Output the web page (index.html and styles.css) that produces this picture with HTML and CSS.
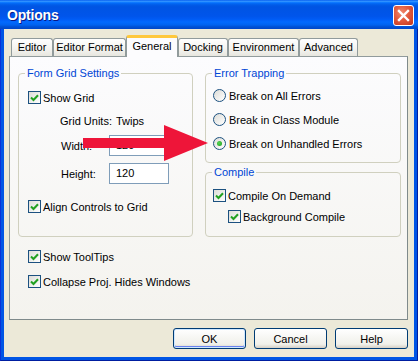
FILE: index.html
```html
<!DOCTYPE html>
<html lang="en">
<head>
    <meta charset="UTF-8">
    <title>Options</title>
    <link rel="stylesheet" href="styles.css">
</head>
<body>
    <div class="window">
        <div class="titlebar">
            <span class="title">Options</span>
            <span class="close">
                <svg width="13" height="13" viewBox="0 0 13 13"><path d="M2 2 L11 11 M11 2 L2 11" stroke="#fff" stroke-width="2.4" stroke-linecap="square"/></svg>
            </span>
        </div>
        <div class="client">
            <div class="tabs">
                <div class="tab w1">Editor</div>
                <div class="tab w2">Editor Format</div>
                <div class="tab w3 active">General</div>
                <div class="tab w4">Docking</div>
                <div class="tab w5">Environment</div>
                <div class="tab w6">Advanced</div>
            </div>
            <div class="panel">
                <div class="cols">
                    <fieldset class="group grid-group">
                        <legend>Form Grid Settings</legend>
                        <div class="group-body">
                            <label class="check-row"><span class="cb"><svg width="9" height="8" viewBox="0 0 9 8"><path d="M1 3.5 L3.5 6 L8 1.2" fill="none" stroke="#21a121" stroke-width="2"/></svg></span>Show Grid</label>
                            <div class="units"><span class="lbl">Grid Units:</span>Twips</div>
                            <div class="field-row first"><span class="lbl">Width:</span><span class="input">120</span></div>
                            <div class="field-row"><span class="lbl">Height:</span><span class="input">120</span></div>
                            <label class="check-row align"><span class="cb"><svg width="9" height="8" viewBox="0 0 9 8"><path d="M1 3.5 L3.5 6 L8 1.2" fill="none" stroke="#21a121" stroke-width="2"/></svg></span>Align Controls to Grid</label>
                        </div>
                    </fieldset>
                    <div class="right-col">
                        <fieldset class="group error-group">
                            <legend>Error Trapping</legend>
                            <div class="group-body radios">
                                <label class="check-row"><span class="rb"></span>Break on All Errors</label>
                                <label class="check-row"><span class="rb"></span>Break in Class Module</label>
                                <label class="check-row"><span class="rb on"></span>Break on Unhandled Errors</label>
                            </div>
                        </fieldset>
                        <fieldset class="group compile-group">
                            <legend>Compile</legend>
                            <div class="group-body compile">
                                <label class="check-row"><span class="cb"><svg width="9" height="8" viewBox="0 0 9 8"><path d="M1 3.5 L3.5 6 L8 1.2" fill="none" stroke="#21a121" stroke-width="2"/></svg></span>Compile On Demand</label>
                                <label class="check-row sub"><span class="cb"><svg width="9" height="8" viewBox="0 0 9 8"><path d="M1 3.5 L3.5 6 L8 1.2" fill="none" stroke="#21a121" stroke-width="2"/></svg></span>Background Compile</label>
                            </div>
                        </fieldset>
                    </div>
                </div>
                <div class="bottom-checks">
                    <label class="check-row"><span class="cb"><svg width="9" height="8" viewBox="0 0 9 8"><path d="M1 3.5 L3.5 6 L8 1.2" fill="none" stroke="#21a121" stroke-width="2"/></svg></span>Show ToolTips</label>
                    <label class="check-row"><span class="cb"><svg width="9" height="8" viewBox="0 0 9 8"><path d="M1 3.5 L3.5 6 L8 1.2" fill="none" stroke="#21a121" stroke-width="2"/></svg></span>Collapse Proj. Hides Windows</label>
                </div>
            </div>
            <div class="buttons">
                <button class="btn default">OK</button>
                <button class="btn">Cancel</button>
                <button class="btn">Help</button>
            </div>
        </div>

        <!-- red pointer arrow drawn over the dialog -->
        <svg class="arrow" width="418" height="361" viewBox="0 0 418 361">
            <polygon points="82,138 163,138 163,125 207,143 163,161 163,148 82,148" fill="#ee1539"/>
        </svg>
    </div>
</body>
</html>
```

FILE: styles.css
```css
body {
    margin: 0;
    font-family: "Liberation Sans", Arial, sans-serif;
    font-size: 11px;
    color: #000;
}
.window {
    position: relative;
    width: 418px;
    height: 361px;
    background: #0055e5;
    box-sizing: border-box;
    border-left: 1px solid #0831d9;
    border-right: 1px solid #001ea0;
    border-bottom: 1px solid #001ea0;
    display: flex;
    flex-direction: column;
}
.titlebar {
    height: 29px;
    flex: none;
    display: flex;
    align-items: flex-start;
    justify-content: space-between;
    background: linear-gradient(to bottom, #0058ee 0%, #3593ff 4%, #288eff 6%, #127dff 8%, #036ffc 10%, #0262ee 14%, #0057e5 20%, #0054e3 24%, #0055eb 56%, #005bf5 66%, #026afe 76%, #0062ef 86%, #0052d6 92%, #0046c8 100%);
    margin: 0 -1px;
}
.title {
    margin: 7px 0 0 7px;
    color: #fff;
    font-weight: bold;
    font-size: 14px;
    letter-spacing: -0.2px;
    text-shadow: 1px 1px #0a1883;
}
.close {
    margin: 5px 4px 0 0;
    width: 21px;
    height: 21px;
    box-sizing: border-box;
    border: 1px solid #fff;
    border-radius: 3px;
    background: radial-gradient(circle at 40% 35%, #f08a6e 0%, #e25a3e 45%, #c2351a 100%);
    display: flex;
    align-items: center;
    justify-content: center;
}
.client {
    flex: 1;
    margin: 0 3px 3px 3px;
    background: #ece9d8;
    display: flex;
    flex-direction: column;
}
.tabs {
    margin: 6px 0 0 7px;
    height: 21px;
    display: flex;
    align-items: flex-end;
    position: relative;
    z-index: 1;
}
.tab {
    box-sizing: border-box;
    height: 18px;
    border: 1px solid #919b9c;
    border-bottom: none;
    border-radius: 3px 3px 0 0;
    background: linear-gradient(to bottom, #ffffff, #f3f3ef 60%, #e7e6df);
    text-align: center;
    line-height: 17px;
}
.tab.active {
    height: 22px;
    margin-bottom: -1px;
    background: #fcfcfe;
    border-top: 3px solid #ffc83c;
    border-radius: 3px 3px 0 0;
    line-height: 16px;
}
.w1 { width: 42px; }
.w2 { width: 73px; }
.w3 { width: 52px; }
.w4 { width: 50px; }
.w5 { width: 71px; }
.w6 { width: 59px; }

.panel {
    flex: none;
    margin-left: 5px;
    width: 399px;
    height: 264px;
    box-sizing: border-box;
    border: 1px solid #919b9c;
    border-right-color: #7f8a8b;
    border-bottom-color: #7f8a8b;
    background: linear-gradient(to bottom, #fcfcfe, #f4f3ee);
    padding: 10px 0 0 8px;
}
.cols {
    display: grid;
    grid-template-columns: 175px 196px;
    column-gap: 12px;
}
.group {
    margin: 0;
    padding: 0;
    box-sizing: border-box;
    border: 1px solid #d0d0bf;
    border-radius: 4px;
    min-width: 0;
}
.group legend {
    margin-left: 6px;
    padding: 0 2px;
    line-height: 13px;
    color: #0046d5;
}
.grid-group { height: 170px; }
.error-group { height: 96px; }
.compile-group { height: 71px; margin-top: 3px; }
.right-col {
    display: flex;
    flex-direction: column;
}
.group-body {
    padding: 11px 0 0 9px;
}
.check-row {
    display: flex;
    align-items: center;
    height: 13px;
    white-space: nowrap;
}
.cb {
    width: 13px;
    height: 13px;
    box-sizing: border-box;
    border: 1px solid #1c5180;
    background: linear-gradient(135deg, #dcdcd7, #ffffff);
    margin-right: 2px;
    display: flex;
    align-items: center;
    justify-content: center;
    flex: none;
}
.rb {
    width: 13px;
    height: 13px;
    box-sizing: border-box;
    border: 1px solid #1c5180;
    border-radius: 50%;
    background: linear-gradient(135deg, #dcdcd7, #ffffff);
    margin-right: 3px;
    display: flex;
    align-items: center;
    justify-content: center;
    flex: none;
}
.rb.on::after {
    content: "";
    width: 5px;
    height: 5px;
    border-radius: 50%;
    background: radial-gradient(circle at 40% 40%, #55d655, #1a9a1a);
}
.units {
    margin: 11px 0 0 32px;
    line-height: 13px;
    display: flex;
}
.units .lbl {
    width: 56px;
}
.field-row {
    margin-top: 7px;
    display: flex;
    align-items: center;
    height: 21px;
}
.field-row .lbl {
    width: 48px;
    margin-left: 33px;
}
.input {
    width: 60px;
    height: 21px;
    box-sizing: border-box;
    border: 1px solid #7f9db9;
    background: #fff;
    padding-left: 6px;
    line-height: 19px;
}
.align { margin-top: 16px; }
.radios { padding: 9px 0 0 7px; }
.radios .check-row { margin-bottom: 11px; }
.compile { padding: 10px 0 0 7px; }
.compile .sub {
    margin: 8px 0 0 15px;
}
.bottom-checks {
    margin: 13px 0 0 10px;
}
.bottom-checks .check-row {
    margin-bottom: 12px;
}
.buttons {
    margin: 8px 6px 0 0;
    display: flex;
    justify-content: flex-end;
    gap: 8px;
}
.btn {
    width: 73px;
    height: 21px;
    box-sizing: border-box;
    border: 1px solid #003c74;
    border-radius: 3px;
    background: linear-gradient(to bottom, #ffffff, #f0f0ea 80%, #d6d0c5);
    font-family: "Liberation Sans", Arial, sans-serif;
    font-size: 11px;
    color: #000;
    padding: 0;
}
.btn.default {
    box-shadow: inset 0 0 0 1px #cee7ff, inset 0 -1px 0 1px #6982ee;
}
.arrow {
    position: absolute;
    left: 0;
    top: 0;
    pointer-events: none;
}
```
